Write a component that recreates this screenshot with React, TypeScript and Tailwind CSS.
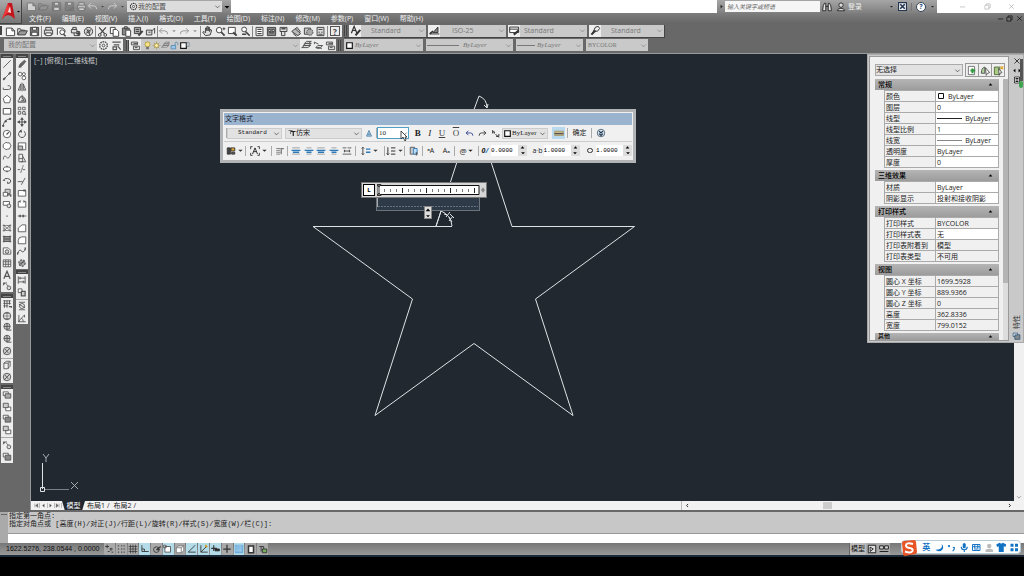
import React from "react";
import type { ReactNode } from "react";

const blue = "#2b78b8";

const art: Record<string, ReactNode> = {
  file: <path d="M2 3h8l4 4v7H2zM10 3v4h4" fill="#fff" />,
  open: <><path d="M1 13l3-6h11l-3 6z" fill="#999" /><path d="M1 13V4h4l1 2h5v1" /></>,
  save: <><path d="M2 2h12v12H2z" fill="#777" /><path d="M5 2h6v4H5zM4 9h8v5H4z" fill="#fff" /></>,
  saveAs: <><path d="M2 2h12v12H2z" fill="#777" /><path d="M5 2h6v4H5z" fill="#fff" /><path d="M8 14l6-6" strokeWidth="3" /></>,
  print: <><path d="M4 6V2h8v4M2 6h12v6H2z" fill="#ddd" /><path d="M4 10h8v4H4z" fill="#fff" /></>,
  preview: <><path d="M2 13V3h8l3 3v3" fill="#fff" /><circle cx="9" cy="9" r="3.5" /><path d="M11 12l3 3" strokeWidth="2" /></>,
  publish: <><path d="M2 5h8v5H2zM4 5V2h5v3" fill="#ddd" /><path d="M6 10v4h8V8h-4" /><path d="M9 11h6M12 8v6" strokeWidth="2" /></>,
  globe: <><circle cx="8" cy="8" r="6" fill="#ddd" /><path d="M8 8l4-3M8 8L5 4M4 11l4-3 2 5" /><circle cx="8" cy="8" r="2" /></>,
  cut: <><path d="M3 2l8 9M13 2L5 11" strokeWidth="1.8" /><circle cx="4" cy="13" r="2" /><circle cx="12" cy="13" r="2" /></>,
  copy: <><path d="M2 2h7v9H2z" fill="#fff" /><path d="M6 5h5l3 3v7H6z" fill="#fff" /></>,
  paste: <><path d="M2 3h10v10H2z" fill="#888" /><path d="M5 1h4v3H5z" /><path d="M7 6h7v9H7z" fill="#fff" /></>,
  match: <><path d="M2 2h9v9H2zM4 5h5M4 8h5" fill="#aaa" /><path d="M8 14l6-7" strokeWidth="3" /></>,
  block: <><path d="M2 6h8v7H2zM5 9h3" fill="#ddd" /><path d="M10 7l4-4v8" /></>,
  undo: <path d="M6 3L2 7l4 4M2 7h8q4 0 4 5" fill="none" />,
  redo: <path d="M10 3l4 4-4 4M14 7H6q-4 0-4 5" fill="none" />,
  pan: <path d="M5 14l-4-5 2-1 2 2V3h2v4-6h2v6-5h2v6l1-3 2 1-2 7z" fill="#ddd" />,
  zoomRt: <><circle cx="6" cy="6" r="4" fill="#fff" /><path d="M9 9l5 5" strokeWidth="2.5" /><path d="M11 4h4M13 2v4" /></>,
  zoomWin: <><path d="M2 2h10v9H2z" fill="#fff" /><path d="M9 9l5 5" strokeWidth="3" /></>,
  zoomPrev: <><circle cx="6" cy="5" r="3.5" fill="#fff" /><path d="M8 8l6 6M3 12h6" strokeWidth="2.2" /></>,
  props: <><path d="M3 2h10v12H3z" fill="#fff" /><path d="M5 5h6M5 8h6M5 11h6" strokeWidth="1.8" /></>,
  center: <><path d="M2 2h12v12H2z" fill="#888" /><path d="M4 5h3v3H4zM9 5h3v3H9zM4 10h8" fill="#fff" /></>,
  palette: <><path d="M3 2h10v6H3zM5 8v6h5V8" fill="#ddd" /><path d="M5 4h6" strokeWidth="2" /></>,
  sheets: <path d="M1 8l5-4 8 7-4 3zM3 11l5 4M6 4l3-2 5 7" fill="#bbb" />,
  markup: <><path d="M2 3h9v9H2z" fill="#ccc" /><circle cx="10" cy="9" r="4.5" strokeDasharray="2 1" fill="#aaa" /></>,
  calc: <><path d="M3 2h10v12H3z" fill="#ddd" /><path d="M5 5h6M5 9h2M9 9h2M5 12h6" /></>,
  gear: <><circle cx="8" cy="8" r="5.5" fill="#eee" strokeDasharray="2.4 1" strokeWidth="2" /><circle cx="8" cy="8" r="2" /></>,
  gearSave: <><path d="M2 3h12M4 7h8M3 10h5v4H3zM10 9l4 5" strokeWidth="1.8" /></>,
  layers: <><path d="M2 3h9v4H2zM5 9h9v5H5z" fill="#ddd" /><path d="M5 5h6M7 11h4" /></>,
  layers2: <path d="M1 11l4-3h9l-4 3zM3 8l4-3h8l-4 3zM5 5l3-3h7l-4 3z" fill="#ddd" />,
  layers3: <path d="M2 3l6 3M2 3v3M7 8h7l-3 3H4zM5 12h8" fill="#ddd" />,
  bulb: <><circle cx="8" cy="6" r="4.5" fill="#f5e28c" stroke="#aa8f31" /><path d="M6 11h4v3H6z" fill="#666" /></>,
  sun: <><circle cx="8" cy="8" r="3.5" fill="#fff29e" stroke="#a0863b" /><path d="M8 1v2M8 13v2M1 8h2M13 8h2M3 3l2 2M11 11l2 2M13 3l-2 2M3 13l2-2" stroke="#a0863b" /></>,
  lock: <><path d="M2 8h8v6H2z" fill="#9cc6e8" stroke="#4c87b4" /><path d="M9 8V4q0-2 2-2t3 2v3" stroke="#4c87b4" fill="none" /></>,
  square: <path d="M3 3h10v10H3z" fill="#fff" stroke="#111" strokeWidth="2" />,
  line: <path d="M2 14L14 2" />,
  xline: <><path d="M2 14L14 2" /><path d="M2 14l3-3M11 5l3-3" strokeWidth="3" /></>,
  pline: <path d="M2 12h8q5 0 4-4-1-3-5-2M2 12V9" fill="none" />,
  polygon: <path d="M8 2l6 5-2 7H4L2 7z" fill="#fff" />,
  rect: <path d="M2 4h12v9H2z" fill="#fff" strokeWidth="1.6" />,
  arc: <><path d="M2 14Q3 4 13 3" fill="none" /><path d="M1 13h2v2H1zM5 6h2v2H5zM12 2h2v2h-2z" fill="#333" /></>,
  circle: <><circle cx="8" cy="8" r="6" fill="#fff" /><path d="M8 8l3-3M7 8h2" strokeWidth="2" /></>,
  cloud: <path d="M4 4q2-3 5-1 4-1 4 2 3 3 0 5 0 4-4 3-3 2-5-1-3-1-2-4-1-3 2-4z" fill="#fff" />,
  spline: <path d="M2 12Q3 3 7 8t7-5" fill="none" />,
  ellipse: <><ellipse cx="8" cy="8" rx="6" ry="3.6" fill="#fff" /><path d="M7 4h2M7 12h2M2 8h1M13 8h1" strokeWidth="2.5" /></>,
  ellArc: <path d="M2 7q2-4 7-3 5 1 5 4 0 4-5 4M2 7h3M9 12v-3" fill="none" strokeWidth="1.6" />,
  insert: <><path d="M5 2h8v7H5z" fill="#ccc" /><path d="M2 7h7v6H2z" fill="#fff" /><path d="M8 11h6v3" strokeWidth="2" /></>,
  make: <><path d="M2 4h10v6H2z" fill="#fff" /><circle cx="11" cy="11" r="3" fill="#ddd" /></>,
  point: <path d="M7 8h2" strokeWidth="2" />,
  hatch: <path d="M3 2v12M13 2v12M1 4h14M1 12h14M3 4l10 8M13 4L3 12M3 8l4 4M9 4l4 4" fill="none" strokeWidth="1" />,
  gradient: <><path d="M3 4h10v8H3z" fill="#999" /><path d="M1 4h14M1 12h14M3 2v12M13 2v12M4 7h8M4 9h8" strokeWidth="1" /></>,
  region: <><path d="M2 3h8l4 4v6H2z" fill="#fff" /><circle cx="8" cy="9" r="3" fill="#ccc" /></>,
  table: <path d="M2 3h12v11H2zM2 6h12M2 10h12M6 3v11M10 3v11" fill="#fff" />,
  letterA: <path d="M3 14L8 2l5 12M5 10h6" fill="none" strokeWidth="2" />,
  addSel: <><path d="M2 7q0-5 6-4M7 5l3 3" fill="none" /><circle cx="11" cy="11" r="3" fill="#ddd" /><path d="M2 4h3M3 2v4" /></>,
  erase: <path d="M3 13l2-5 7-6 2 2-6 7zM3 13h4" fill="#666" />,
  copyObj: <><circle cx="5" cy="5" r="3" fill="#fff" /><circle cx="11" cy="5" r="2.4" fill="#fff" /><circle cx="11" cy="11" r="3" fill="#fff" /></>,
  mirror: <path d="M6 3v10H2zM10 3v10h4zM8 1v14" fill="#ccc" />,
  offset: <path d="M2 13h12q0-8-6-9v3q3 1 3 3H7M3 10q0-5 6-8M2 13v-3" fill="#aaa" strokeWidth="1.6" />,
  array: <path d="M2 2h4v4H2zM9 2h4v4H9zM2 9h4v4H2zM9 9h4v4H9zM13 13h1v1h-1z" fill="#fff" />,
  move: <><path d="M8 2v12M2 8h12" strokeWidth="1.8" /><path d="M6 4l2-3 2 3zM6 12l2 3 2-3zM4 6L1 8l3 2zM12 6l3 2-3 2z" fill="#333" /></>,
  rotate: <><path d="M5 3.5A5.5 5.5 0 1 0 11 3.5" fill="none" strokeWidth="1.6" /><path d="M7 1L4 4l4 1" fill="#444" /></>,
  scale: <><path d="M2 3h12v11H2z" fill="#fff" /><path d="M2 8h7v6H2z" fill="#bbb" /></>,
  stretch: <path d="M3 2h6v12H3zM9 5l5 9H6M3 9h6" fill="#eee" />,
  trim: <path d="M1 9h5M9 9h5M6 14L10 2" strokeDasharray="4 1" />,
  extend: <path d="M1 9h8M7 14L13 3" />,
  breakAt: <><path d="M2 4h12v9H2z" fill="#fff" /><path d="M10 4h4" strokeWidth="3" /></>,
  breakIt: <path d="M5 4H2v9h12V4h-3M5 2v4M11 2v4" fill="#fff" />,
  join: <><path d="M1 8h14" /><path d="M5 6v4M10 6v4" strokeWidth="2.5" /></>,
  chamfer: <path d="M2 14V8l6-5h6v11z" fill="#fff" />,
  fillet: <path d="M2 14V9q0-6 6-6h6v11z" fill="#fff" />,
  blend: <path d="M1 13q3-10 6-5t7-5M1 10v4M13 2v5" fill="none" strokeWidth="1.6" />,
  explode: <><circle cx="8" cy="8" r="5" fill="#aaa" strokeDasharray="3 2" strokeWidth="2" /><path d="M4 9l8-3M6 11l4-6" /></>,
  dim: <path d="M2 2v12M13 2v12M2 5h11M2 11h11M5 3v4M10 9v4" fill="none" />,
  copyDim: <><path d="M2 3h6v6H2z" fill="#fff" /><path d="M7 7h6v7H7z" fill="#ccc" strokeWidth="2" /></>,
  centerMark: <><circle cx="8" cy="8" r="4" /><path d="M3 2h10M3 14h10M3 5l10 6" /></>,
  angle: <path d="M2 14L12 3M2 14h12M10 14q0-4-3-6M3 3v11M12 3v4" fill="none" />,
  wire2d: <><path d="M2 3h12M2 7h12M2 11h8M4 2v12M8 2v12M12 2v7" /><path d="M11 12h4v2" strokeWidth="2" /></>,
  sphere: <><circle cx="8" cy="8" r="6" fill="#e4e4e4" /><path d="M2 8h12M8 2v12M4 4h8M4 12h8" strokeWidth=".9" /></>,
  sphereHalf: <><circle cx="8" cy="7" r="5" fill="#ccc" /><path d="M3 7h10M8 2v10M7 13h8" strokeWidth="1.6" /></>,
  sphereFill: <><circle cx="8" cy="8" r="6" fill="#ccc" /><path d="M3 13L13 3M5 5l5 6" /></>,
  cube: <path d="M3 5l4-3h6v8l-4 4H3zM3 5h7v9M10 5l3-3" fill="#eee" />,
  orderFront: <><path d="M2 3h8v6H2z" fill="#fff" /><path d="M5 6h9v7H5z" fill="#aaa" /></>,
  orderBack: <><path d="M6 8h8v6H6z" fill="#fff" /><path d="M2 2h8v7H2z" fill="#ccc" /></>,
  orderUp: <><path d="M2 2h8v6H2z" fill="#fff" /><path d="M5 5h9v8H5z" fill="#888" /></>,
  snap: <path d="M2 4h6M5 1v6M9 8h5M11 6v5M6 12h3M12 13h3" fill="none" />,
  infer: <path d="M3 3h2M8 3h2M12 3h2M3 8h2M8 8h2M12 8h2M3 13h2M8 13h2M12 13h2" strokeWidth="1.5" />,
  grid: <path d="M1 4h14M1 8h14M1 12h14M4 1v14M8 1v14M12 1v14" strokeWidth="1.1" />,
  ortho: <path d="M3 2v10h11M3 8h4v4" fill="none" />,
  polar: <><circle cx="7" cy="9" r="4.5" fill="none" /><path d="M7 9l7-5M7 9h5" strokeWidth="1.8" /></>,
  osnap: <path d="M3 4h9v9H3zM1 2h4v4H1z" fill="#fff" stroke="#555" />,
  osnap3: <path d="M2 6l4-3h8v8l-4 3H2zM2 6h8v8M10 6l4-3" fill="#fff" stroke="#777" />,
  track: <path d="M13 2L2 13h12" fill="none" />,
  ducs: <><path d="M3 2v11h11M3 13L12 4" fill="none" /><path d="M10 2l3 3" stroke="#d19a22" strokeWidth="3" /></>,
  dyn: <><path d="M6 2v9M2 7h9" strokeWidth="1.8" /><path d="M8 8h7v3H8z" fill="#222" /></>,
  lwt: <path d="M8 1v13M2 8h12" strokeWidth="2" />,
  transp: <><path d="M2 2h12v12H2z" fill="#67a7d8" stroke="#67a7d8" /><path d="M2 5h12M2 8h12M2 11h12M5 2v12M8 2v12M11 2v12" stroke="#c8e7f8" strokeDasharray="1 1" /></>,
  qp: <path d="M4 3h8v11H4z" fill="#fff" strokeWidth="2.4" />,
  cycle: <><path d="M2 4h7v5M5 4v8" fill="none" /><path d="M7 8h7v6H7z" fill="#75ae5c" /></>,
  caret: <path d="M3 6h10l-5 5z" fill="currentColor" stroke="none" />,
  chevron: <path d="M3 6l5 5 5-5" fill="none" />,
  up: <path d="M2 11h12L8 4z" fill="currentColor" stroke="none" />,
  right: <path d="M5 2v12l7-6z" fill="currentColor" stroke="none" />,
  left: <path d="M11 2v12L4 8z" fill="currentColor" stroke="none" />,
  first: <path d="M12 2v12L6 8zM3 2v12" fill="currentColor" />,
  last: <path d="M4 2v12l6-6zM13 2v12" fill="currentColor" />,
  arrowL: <path d="M10 3L5 8l5 5" fill="none" strokeWidth="3" />,
  arrowR: <path d="M6 3l5 5-5 5" fill="none" strokeWidth="3" />,
  min: <path d="M2 9h12" />,
  restore: <path d="M2 5h9v9H2zM5 5V2h9v9h-3" fill="none" />,
  close: <path d="M3 3l10 10M13 3L3 13" />,
  binoc: <><path d="M2 6l2-4h2v12H1zM14 6l-2-4h-2v12h5zM6 7h4" fill="#e4e4e4" /></>,
  user: <><circle cx="8" cy="5" r="3.5" fill="#ddd" /><path d="M2 14q1-4 6-4t6 4z" fill="#ddd" /></>,
  exchange: <><path d="M1 1h14v14H1z" fill="#f4f4f4" stroke="#23354f" strokeWidth="2" /><path d="M4 4l8 8M12 4l-8 8" strokeWidth="3" stroke="#23354f" /></>,
  styleA: <><path d="M2 12L6 2l4 10M4 8h4" fill="none" strokeWidth="1.8" /><path d="M8 15l7-8" strokeWidth="3" /></>,
  styleDim: <><path d="M1 13h14M6 11l7-8v8z" fill="#888" /><path d="M1 13l5-4" strokeWidth="2.5" /></>,
  styleTable: <><path d="M1 3h13v8H1zM1 6h13" fill="#fff" /><path d="M7 14l7-6" strokeWidth="3" /></>,
  styleLead: <><path d="M3 13L8 3l4-1 2 3-3 4H7" fill="#eee" /><path d="M2 14l6-6" strokeWidth="3" /></>,
  columns: <><path d="M2 3h5v10H2z" fill="#444" /><path d="M8 3h6v5H8z" fill="#e0a92e" /><path d="M9 10h5v3H9z" fill="#666" /></>,
  boxA: <><path d="M4 13l4-10 4 10M6 9h4" fill="none" strokeWidth="1.6" /><path d="M1 5V1h3M12 1h3v4M1 11v4h3M12 15h3v-4" fill="none" /></>,
  para: <><path d="M2 4h7M2 7h6M2 10h7M2 13h6" stroke="#777" /><path d="M10 13V4h4" strokeWidth="2" stroke="#777" /></>,
  lines: <><path d="M2 3h12M2 13h12" stroke="#999" /><path d="M1 7h14M3 10h10" stroke={blue} strokeWidth="2.2" /></>,
  linesC: <><path d="M4 3h8M4 13h8" stroke="#999" /><path d="M1 7h14M4 10h8" stroke={blue} strokeWidth="2.2" /></>,
  dist: <><path d="M1 3h6M9 3h6M1 13h14" /><path d="M3 8h10M4 6v4M12 6v4" strokeWidth="1.8" /></>,
  spacing: <><path d="M3 2v12M1 4l2-2 2 2M1 12l2 2 2-2" fill="none" /><path d="M8 5h7M8 10h7" stroke={blue} strokeWidth="2.3" /></>,
  number: <path d="M3 2v12M1 12l2 2 2-2M8 3h7M8 8h7M8 13h7" fill="none" strokeWidth="1.6" />,
  field: <><path d="M2 2h7v11H2z" fill="#ccc" /><path d="M7 4h6v9H7z" fill="#c0ddf4" stroke={blue} /><path d="M12 10v5" strokeWidth="2.5" /></>,
  ruler: <><path d="M1 5h14v7H1z" fill="#c6b686" stroke="#a89a72" /><path d="M1 9h14" stroke="#555" strokeWidth="2" /></>,
  more: <><circle cx="8" cy="8" r="6" fill="#d5e3ef" stroke="#4f6476" /><path d="M5 5l3 3 3-3M5 9l3 3 3-3" fill="none" stroke="#1d3549" strokeWidth="1.8" /></>,
  tt: <><path d="M1 3h8M5 3v7" strokeWidth="2" stroke="#777" /><path d="M6 5h9M10.5 5v9" strokeWidth="2.4" /></>,
  aScale: <path d="M4 13l4-9 4 9zM6 10h4" fill="#a9c9e2" stroke="#5585a8" />,
  fraction: <><path d="M3 2v6M3 5h3v3M8 9l6 6M9 13h5V9" fill="none" strokeWidth="1.6" /></>,
  addObj: <><path d="M2 2h9v12H2z" fill="#fff" stroke="#777" /><path d="M8 5v7M5 8h7" stroke="#2f963d" strokeWidth="3" /></>,
  pick: <><path d="M2 12q0-8 5-9v9z" fill="#aed69c" /><path d="M8 4l6 7-3 1-2 3z" fill="#fff" /></>,
  quick: <><path d="M2 3h8v11H2z" fill="#a9cb83" stroke="#597040" /><path d="M8 5l5 6-3 1-1 3z" fill="#fff" /><path d="M11 2l4 4M15 2l-4 4" stroke="#e3a72b" strokeWidth="2" /></>,
  modelView: <path d="M2 2h12v12H2zM5 5l5 3-5 4z" fill="#ddd" />,
  layoutView: <path d="M1 3h6v5H1zM9 3h6v5H9zM1 12h14" fill="#ddd" />,
};

function Icon({ name, className = "size-[11px]" }: { name: string; className?: string }) {
  return (
    <svg viewBox="0 0 16 16" aria-hidden="true" className={`shrink-0 ${className}`} fill="none" stroke="currentColor" strokeWidth="1.4">
      {art[name]}
    </svg>
  );
}

function Tool({ name, className = "text-[#555]", icon }: { name: string; className?: string; icon?: string }) {
  return (
    <button type="button" aria-label={name} className={`flex min-h-0 min-w-0 flex-1 items-center justify-center ${className}`}>
      <Icon name={name} className={icon} />
    </button>
  );
}

function Combo({ label, value, lead, className = "", text = "" }: { label: string; value: string; lead?: ReactNode; className?: string; text?: string }) {
  return (
    <label className={`flex shrink-0 items-center overflow-hidden ${className}`}>
      {lead}
      <select aria-label={label} defaultValue={value} className={`min-w-0 flex-1 appearance-none bg-transparent leading-[10px] outline-none ${text}`}>
        <option>{value}</option>
      </select>
      <Icon name="chevron" className="mr-px size-[7px]" />
    </label>
  );
}

const Grip = () => <span className="h-[11px] w-[3px] shrink-0 border-x border-[#444] bg-[#777]" />;

const toolGroups: [string, string[]][] = [
  ["w-[38px]", ["file", "open", "save"]],
  ["w-[54px]", ["print", "preview", "publish", "globe"]],
  ["w-[62px]", ["cut", "copy", "paste", "match", "block"]],
  ["w-[43px] text-[#999]", ["undo", "caret", "redo", "caret"]],
  ["w-[52px]", ["pan", "zoomRt", "zoomWin", "zoomPrev"]],
  ["w-[75px]", ["props", "center", "palette", "sheets", "markup", "calc"]],
];

const menus = ["文件(F)", "编辑(E)", "视图(V)", "插入(I)", "格式(O)", "工具(T)", "绘图(D)", "标注(N)", "修改(M)", "参数(P)", "窗口(W)", "帮助(H)"];

function TitleBar() {
  return (
    <header className="flex h-6 shrink-0 bg-gradient-to-b from-[#999] to-[#666]">
      <button type="button" aria-label="应用程序菜单" className="flex w-[22px] shrink-0 items-center border-r border-b border-[#444] bg-gradient-to-b from-[#aaa] to-[#777] pb-px">
        <svg viewBox="0 0 16 18" className="h-[18px] w-4">
          <path d="M2 17L8 1h4l3 16-4-3-3-1-3 1z" fill="#c3161c" />
          <path d="M2 17L8 1l2 9-4 2z" fill="#ed3a3a" />
          <path d="M8 10l2-6 1 7z" fill="#fbe2e2" />
        </svg>
        <Icon name="caret" className="size-[5px]" />
      </button>
      <div className="flex min-w-0 flex-1 flex-col">
        <div className="flex h-[13px] items-stretch bg-white">
          <div className="flex w-[209px] shrink-0 items-center bg-gradient-to-b from-[#a6a6a6] to-[#808080]">
            <div className="flex w-[66px] pl-[3px]">
              {["file", "open", "save", "saveAs", "print"].map((n) => <Tool key={n} name={n} className="text-[#666] opacity-60" />)}
            </div>
            <div className="flex w-[39px] items-center text-[#ccc]">
              <Tool name="undo" className="" />
              <Tool name="caret" className="text-[#444]" icon="size-[5px]" />
              <Tool name="redo" className="" />
              <Tool name="caret" className="text-[#444]" icon="size-[5px]" />
            </div>
            <Combo label="工作空间" value="我的配置" className="h-[11px] w-[95px] bg-[#dcdcdc] text-[#333]" text="text-[7px] text-[#555]" lead={<Icon name="gear" className="ml-0.5 size-[9px]" />} />
            <span className="flex flex-1 justify-center"><Icon name="caret" className="size-[8px] text-black" /></span>
          </div>
          <div className="flex-1" />
          <div className="flex w-[220px] shrink-0 items-center bg-gradient-to-b from-[#a6a6a6] to-[#808080] text-[#222]">
            <span className="flex w-2 justify-center"><Icon name="right" className="size-[5px]" /></span>
            <input aria-label="搜索" placeholder="输入关键字或短语" className="h-[11px] w-[95px] bg-[#f6f6f6] pl-0.5 text-[6px] italic outline-none placeholder:text-[#666]" />
            <Icon name="binoc" className="mx-0.5 size-[10px]" />
            <Icon name="user" className="mx-0.5 size-[10px]" />
            <a href="#login" className="flex-1 text-[7px] leading-[10px] text-[#eee]">登录</a>
            <Icon name="caret" className="mr-1 size-[5px]" />
            <Icon name="exchange" className="mr-1 size-[9px]" />
            <span className="h-2 w-px bg-[#777]" />
            <button type="button" aria-label="帮助" className="mx-1 flex size-[10px] items-center justify-center rounded-full border border-[#345] bg-white text-[7px] leading-[8px] font-bold text-[#1d4c80]">?</button>
            <Icon name="caret" className="mr-0.5 size-[5px]" />
          </div>
          <div className="flex w-[87px] shrink-0 items-center pl-[13px] text-[#aaa]">
            {["min", "restore", "close"].map((n) => <Tool key={n} name={n} className="" icon="size-[7px]" />)}
          </div>
        </div>
        <nav className="flex flex-1 items-center pl-[7px] text-[7px] leading-[10px] text-[#eee]">
          <div className="flex flex-1 gap-[11px]">
            {menus.map((m) => <button type="button" key={m} className="whitespace-nowrap">{m}</button>)}
          </div>
          <div className="flex w-7 shrink-0 text-black">
            {["min", "restore", "close"].map((n) => <Tool key={n} name={n} className="" icon="size-[7px]" />)}
          </div>
        </nav>
      </div>
    </header>
  );
}

const grayCombo = "h-3 bg-[#c9c9c9] text-[#777]";

function StandardBar() {
  const styles: [string, string, string, string, string][] = [
    ["文字样式", "styleA", "Standard", "w-[77px]", "pl-2.5 font-['Open_Sans'] text-[7px]"],
    ["标注样式", "styleDim", "ISO-25", "w-[78px]", "pl-3 font-['Open_Sans'] text-[7px]"],
    ["表格样式", "styleTable", "Standard", "w-[79px]", "pl-1 font-['Open_Sans'] text-[7px]"],
    ["引线样式", "styleLead", "Standard", "w-[75px]", "pl-2.5 font-['Open_Sans'] text-[7px]"],
  ];
  return (
    <div className="flex h-[14px] shrink-0 items-center">
      <div className="flex h-3 items-center bg-[#ececec] text-[#444]">
        <span className="mr-0.5"><Grip /></span>
        {toolGroups.map(([cls, names], i) => (
          <div key={i} className={`flex h-[11px] items-center border-r border-[#888] ${cls}`}>
            {names.map((n, j) => <Tool key={j} name={n} className="" icon={n === "caret" ? "size-[6px]" : "size-[11px]"} />)}
          </div>
        ))}
        <button type="button" aria-label="帮助" className="mx-0.5 flex size-[10px] items-center justify-center border border-[#555] text-[8px] leading-[9px] font-bold">?</button>
      </div>
      <div className="ml-0.5 flex items-center gap-[2px] border-r border-b border-[#444]">
        <Grip />
        {styles.map(([label, icon, value, w, text]) => (
          <Combo key={label} label={label} value={value} className={`${grayCombo} ${w}`} text={text} lead={<span className="flex h-3 w-3 items-center justify-center bg-[#eee] text-[#333]"><Icon name={icon} /></span>} />
        ))}
      </div>
    </div>
  );
}

function LayerBar() {
  const rule = (w: string) => <span className={`ml-px h-px shrink-0 bg-[#777] ${w}`} />;
  return (
    <div className="flex h-[14px] shrink-0 items-center pl-1">
      <Combo label="工作空间" value="我的配置" className={`${grayCombo} w-[93px]`} text="pl-1 text-[7px]" />
      <div className="flex h-3 w-[26px] bg-[#ececec]"><Tool name="gear" /><Tool name="gearSave" /></div>
      <div className="ml-[3px] flex h-3 w-[210px] items-center bg-[#ececec]">
        <Grip />
        <span className="flex w-3"><Tool name="layers" /></span>
        <Combo label="图层" value="0" className={`${grayCombo} w-[159px]`} text="text-[7px]" lead={<span className="flex w-[45px] shrink-0 items-center justify-between pl-0.5">{["bulb", "sun", "layers2", "lock", "square"].map((n) => <Icon key={n} name={n} className="size-[9px]" />)}</span>} />
        <Tool name="layers2" /><Tool name="layers3" /><Tool name="layers" />
      </div>
      <div className="ml-0.5 flex items-center gap-[3px] font-['Liberation_Serif']">
        <Grip />
        <Combo label="颜色" value="ByLayer" className={`${grayCombo} w-[79px] italic`} text="pl-px text-[7px]" lead={<Icon name="square" className="ml-px size-[9px]" />} />
        <Combo label="线型" value="ByLayer" className={`${grayCombo} w-[87px] italic`} text="pl-1 text-[7px]" lead={rule("w-[32px]")} />
        <Combo label="线宽" value="ByLayer" className={`${grayCombo} w-[67px] italic`} text="pl-0.5 text-[7px]" lead={rule("w-[18px]")} />
        <Combo label="打印样式" value="BYCOLOR" className={`${grayCombo} w-[62px]`} text="pl-0.5 text-[6px]" />
      </div>
    </div>
  );
}

function Rail({ names, height, sep }: { names: string[]; height: string; sep?: number }) {
  return (
    <div className="flex w-3 flex-col">
      <span className="flex h-1 items-center justify-center bg-[#444]"><span className="h-px w-2 bg-[#888]" /></span>
      <div className={`flex flex-col bg-[#ededed] ${height}`}>
        {names.map((n, i) => (
          <React.Fragment key={i}>
            {i === sep && <span className="my-px h-px bg-[#aaa]" />}
            <Tool name={n} icon="size-[10px]" />
          </React.Fragment>
        ))}
      </div>
    </div>
  );
}

const draw = ["line", "xline", "pline", "polygon", "rect", "arc", "circle", "cloud", "spline", "ellipse", "ellArc", "insert", "make", "point", "hatch", "gradient", "region", "table", "letterA", "addSel"];
const modify = ["erase", "copyObj", "mirror", "offset", "array", "move", "rotate", "scale", "stretch", "trim", "extend", "breakAt", "breakIt", "join", "chamfer", "fillet", "blend", "explode"];

function ToolRails() {
  return (
    <aside className="flex w-[31px] shrink-0 gap-[3px] border-r border-[#999] pl-px">
      <div className="flex flex-col gap-0.5">
        <Rail names={draw} height="h-[234px]" />
        <Rail names={["wire2d", "sphere", "sphereHalf", "sphereHalf", "sphereFill", "cube", "sphereFill"]} height="h-[85px]" sep={5} />
        <Rail names={["orderFront", "orderBack", "orderUp", "orderBack", "addSel", "orderUp"]} height="h-[74px]" sep={4} />
      </div>
      <div className="flex flex-col gap-px">
        <Rail names={modify} height="h-[211px]" />
        <Rail names={["dim", "copyDim", "centerMark", "angle"]} height="h-[50px]" sep={2} />
      </div>
    </aside>
  );
}

function Drawing() {
  return (
    <svg className="absolute inset-0 h-full w-full" fill="none" stroke="#dfe3e5" strokeWidth="1">
      <g transform="translate(-31 -54)">
        <path d="M452 226.5H313L412.5 299 375 415.5 474 343.5 573 415.5 535.5 299 634.5 226.5H512L474 109.5 436 226.5" />
        <path d="M474 109.5L479 96q8 3 8 12M484 105l3 3 1-4M436 226l5-15q10 4 11 15M444 214l3 1M446 217l4-5M449 221l4-5M450 214l4 4M449 217l3 5" />
        <path d="M42.5 463v26M40.5 487.5h4v4h-4z" />
        <path d="M45 489.5h24" stroke="#7a8084" />
        <path d="M43 454l3 4 3-4M46 458v4M71 482l7 7M78 482l-7 7" stroke="#a8adb0" />
      </g>
    </svg>
  );
}

const Sep = () => <span className="h-[10px] w-px shrink-0 bg-[#aaa]" />;

function Spin({ label, value, lead }: { label: string; value: string; lead: ReactNode }) {
  return (
    <label className="flex items-center">
      <span className="flex w-3 justify-center text-[7px] leading-[10px] text-[#222]">{lead}</span>
      <input aria-label={label} defaultValue={value} className="h-[11px] w-[27px] bg-white font-['Liberation_Mono'] text-[6px] text-black outline-none" />
      <span className="flex w-[9px] flex-col items-center bg-[#ddd] text-black">
        <Icon name="up" className="size-[5px]" />
        <Icon name="caret" className="size-[6px]" />
      </span>
    </label>
  );
}

function Pair({ name, w }: { name: string; w: string }) {
  return (
    <button type="button" aria-label={name} className={`flex items-center justify-center gap-px text-[#333] ${w}`}>
      <Icon name={name} className="size-[10px]" />
      <Icon name="caret" className="size-[7px]" />
    </button>
  );
}

function TextFormat() {
  return (
    <section className="absolute top-[55px] left-[189px] flex w-[416px] flex-col border-3 border-[#b2b4b6] bg-[#f0f0f0] p-px text-[#222]">
      <h2 className="h-3 bg-[#9ab3cf] pl-px text-[7px] leading-[12px] text-[#1c2733]">文字格式</h2>
      <div className="flex h-[17px] items-center border-b border-[#ccc] pl-0.5">
        <Sep />
        <Combo label="样式" value="Standard" className="h-[11px] w-[55px] border border-[#ccc] bg-[#e2e2e2]" text="pl-2.5 font-['Liberation_Mono'] text-[6px]" />
        <Combo label="字体" value="仿宋" className="ml-[3px] h-[11px] w-[77px] border border-[#ccc] bg-[#e2e2e2]" text="text-[7px]" lead={<Icon name="tt" className="ml-0.5 size-[8px]" />} />
        <span className="flex w-[14px]"><Tool name="aScale" icon="size-[10px]" /></span>
        <Sep />
        <label className="flex h-3 w-8 items-center border border-[#4f9fc8] bg-white">
          <input aria-label="文字高度" defaultValue="10" className="h-[10px] w-0 min-w-0 flex-1 pl-px font-['Liberation_Serif'] text-[7px] outline-none" />
          <Icon name="chevron" className="size-[7px]" />
        </label>
        <div className="flex w-[54px] items-center justify-around pl-0.5 font-['Liberation_Serif'] text-[9px] leading-[12px]">
          <button type="button" className="font-bold">B</button>
          <button type="button" className="italic">I</button>
          <button type="button" className="text-[#444] underline">U</button>
          <button type="button" className="text-[#444] overline">O</button>
        </div>
        <div className="flex w-[39px] text-[#1b2f86]">
          <Tool name="undo" className="" icon="size-[9px]" />
          <Tool name="redo" className="text-[#222]" icon="size-[9px]" />
          <Tool name="fraction" className="text-[#222]" icon="size-[9px]" />
        </div>
        <Combo label="颜色" value="ByLayer" className="h-[11px] w-[46px] border border-[#ccc] bg-[#e2e2e2]" text="font-['Liberation_Serif'] text-[7px]" lead={<Icon name="square" className="size-[9px]" />} />
        <span className="mx-px"><Sep /></span>
        <button type="button" aria-label="标尺" className="mx-0.5 flex h-3 w-[13px] items-center justify-center bg-[#b9d9ef]"><Icon name="ruler" className="size-[10px]" /></button>
        <Sep />
        <button type="button" className="w-[23px] text-[7px] leading-[10px]">确定</button>
        <Sep />
        <span className="flex w-[18px]"><Tool name="more" icon="size-[10px]" /></span>
      </div>
      <div className="flex h-[17px] items-center">
        <Pair name="columns" w="w-[21px]" />
        <Sep />
        <Pair name="boxA" w="w-[25px]" />
        <Sep />
        <span className="flex w-[15px]"><Tool name="para" icon="size-[10px]" /></span>
        <Sep />
        <div className="flex w-[67px] px-0.5">
          {["lines", "linesC", "lines", "linesC", "dist"].map((n, i) => <Tool key={i} name={n} icon="size-[10px]" />)}
        </div>
        <Sep />
        <Pair name="spacing" w="w-[28px]" />
        <Sep />
        <Pair name="number" w="w-[19px]" />
        <Sep />
        <span className="flex w-[17px]"><Tool name="field" icon="size-[10px]" /></span>
        <Sep />
        <div className="flex w-[31px] items-center justify-around text-[7px] leading-[10px]">
          <button type="button">ᵃA</button>
          <button type="button">Aₐ</button>
        </div>
        <Sep />
        <button type="button" className="flex w-[23px] items-center justify-center text-[8px] leading-[10px]">@<Icon name="caret" className="size-[7px]" /></button>
        <Sep />
        <div className="flex flex-1 justify-between">
          <Spin label="倾斜角度" value="0.0000" lead={<b className="italic">0<span className="text-[#2b78b8]">/</span></b>} />
          <Spin label="追踪" value="1.0000" lead="a·b" />
          <Spin label="宽度因子" value="1.0000" lead={<span className="h-[5px] w-[6px] rounded-full border border-[#333]" />} />
        </div>
      </div>
    </section>
  );
}

function InlineEditor() {
  return (
    <div className="absolute top-[128px] left-[330px] w-[126px]">
      <div className="flex h-4 items-center border border-[#777] bg-[#d6d6d6] px-px">
        <button type="button" aria-label="制表符" className="flex size-3 shrink-0 items-center justify-center border border-black bg-white text-[6px] leading-[8px] font-bold">L</button>
        <svg viewBox="0 0 103 12" className="ml-0.5 h-3 w-[103px] shrink-0">
          <path d="M0 1.500h102v9H0z" fill="#fff" stroke="#111" />
          <path d="M7.500 5v3M13.500 5v3M19.500 5v3M31.500 5v3M37.500 5v3M43.500 5v3M55.500 5v3M61.500 5v3M67.500 5v3M79.500 5v3M85.500 5v3M91.500 5v3" stroke="#777" />
          <path d="M25.500 4v5M49.500 4v5M73.500 4v5M97.500 4v5" stroke="#222" />
          <path d="M0 .5h4L2 3zM0 11.500h4L2 9zM2 2v8" fill="#888" stroke="#333" />
        </svg>
        <svg viewBox="0 0 6 8" className="ml-px h-2 w-1.5"><path d="M3 0l3 4-3 4-3-4z" fill="#888" /></svg>
      </div>
      <textarea aria-label="多行文字" className="ml-[15px] block h-[13px] w-[104px] resize-none border border-t-0 border-[#6c747b] bg-[#2e3a47] outline-none" />
      <svg viewBox="0 0 104 13" className="absolute top-4 left-[15px] h-[13px] w-[104px]">
        <path d="M2 8.500h100" stroke="#66727d" strokeDasharray="2 1" />
        <path d="M1.500 0v9" stroke="#aaa" />
      </svg>
      <span className="absolute top-6 left-[63px] flex h-[13px] w-2 flex-col items-center justify-center border border-[#888] bg-[#ddd] text-black">
        <Icon name="up" className="size-[6px]" />
        <Icon name="caret" className="size-[6px]" />
      </span>
    </div>
  );
}

type Row = [string, ReactNode];
const by = (w: string) => <span className="flex items-center justify-end gap-[3px] pr-[7px]"><span className={`h-px w-[25px] ${w}`} />ByLayer</span>;
const sections: { title: string; height: string; rows: Row[]; dim?: number[] }[] = [
  { title: "常规", height: "h-[78px]", rows: [["颜色", <span className="flex items-center gap-[3px]"><Icon name="square" className="size-[8px]" />ByLayer</span>], ["图层", "0"], ["线型", by("bg-[#222]")], ["线型比例", "1"], ["线宽", by("bg-[#888]")], ["透明度", "ByLayer"], ["厚度", "0"]] },
  { title: "三维效果", height: "h-[23px]", rows: [["材质", "ByLayer"], ["阴影显示", "投射和接收阴影"]] },
  { title: "打印样式", height: "h-[45px]", rows: [["打印样式", "BYCOLOR"], ["打印样式表", "无"], ["打印表附着到", "模型"], ["打印表类型", "不可用"]], dim: [0, 2, 3] },
  { title: "视图", height: "h-[56px]", rows: [["圆心 X 坐标", "1699.5928"], ["圆心 Y 坐标", "889.9366"], ["圆心 Z 坐标", "0"], ["高度", "362.8336"], ["宽度", "799.0152"]], dim: [0, 1, 2, 3, 4] },
];

function SectionHead({ title, className }: { title: string; className: string }) {
  return (
    <h3 className={`flex shrink-0 items-center justify-between bg-gradient-to-b from-[#b5b5b5] to-[#9c9c9c] pr-1.5 pl-[3px] font-medium text-black ${className}`}>
      {title}
      <Icon name="up" className="size-[5px]" />
    </h3>
  );
}

function Properties() {
  return (
    <section className="absolute top-0 right-0 flex w-[157px] border border-[#aaa] bg-[#c9c9c9] text-[7px] text-[#222]">
      <div className="m-px flex min-w-0 flex-1 flex-col border border-[#999] bg-[#f0f0f0] pt-[6px] pl-[5px]">
        <div className="flex h-[14px] shrink-0 items-center gap-[2px]">
          <Combo label="选择对象" value="无选择" className="h-3 w-[88px] border border-[#aaa] bg-[#e2e2e2]" text="text-[7px]" />
          <div className="flex h-[14px] w-[40px] divide-x divide-[#999] border border-[#999]">
            {["addObj", "pick", "quick"].map((n) => <Tool key={n} name={n} icon="size-[11px]" />)}
          </div>
        </div>
        <div className="mt-0.5 flex gap-1">
          <div className="flex w-[124px] flex-col gap-0.5">
            {sections.map((s) => (
              <div key={s.title} className="shrink-0">
                <SectionHead title={s.title} className="h-[11px] leading-[11px]" />
                <div className="pl-[9px]">
                  <table className={`w-full table-fixed border-collapse ${s.height}`}>
                    <tbody>
                      {s.rows.map(([k, v], i) => (
                        <tr key={k}>
                          <th scope="row" className="w-[51px] overflow-hidden border border-[#aaa] bg-[#f0f0f0] p-0 pl-px text-left leading-[9px] font-normal whitespace-nowrap">{k}</th>
                          <td className={`overflow-hidden border border-[#aaa] p-0 pl-px leading-[9px] whitespace-nowrap ${s.dim?.includes(i) ? "bg-[#f0f0f0]" : "bg-white"}`}>{v}</td>
                        </tr>
                      ))}
                    </tbody>
                  </table>
                </div>
              </div>
            ))}
            <SectionHead title="其他" className="h-[7px] text-[6px] leading-[7px]" />
          </div>
          <div className="w-[5px] bg-[#ddd]"><div className="h-[204px] bg-[#b4b4b4]" /></div>
        </div>
      </div>
      <div className="flex w-[13px] flex-col items-center gap-[3px] pt-0.5 text-black">
        <Icon name="close" className="size-[8px]" />
        <span className="flex"><Icon name="left" className="size-[5px]" /><Icon name="right" className="size-[5px]" /></span>
        <Icon name="props" className="size-[8px]" />
        <span className="flex-1" />
        <span className="rotate-180 leading-[8px] text-[#333] [text-orientation:sideways] [writing-mode:vertical-rl]">特性</span>
        <Icon name="orderUp" className="mb-px size-[9px] text-[#27557d]" />
      </div>
      <span className="absolute top-1 right-0 h-[22px] w-[3px] bg-[#555]" />
      <span className="absolute top-[26px] right-0 h-[7px] w-1 rounded-sm bg-[#3fa34f]" />
    </section>
  );
}

function Workspace() {
  return (
    <main className="relative flex min-h-0 flex-1 border-t border-[#999]">
      <ToolRails />
      <div className="flex min-w-0 flex-1 flex-col">
        <div className="flex min-h-0 flex-1">
          <div className="relative min-w-0 flex-1 overflow-hidden bg-[#212830]">
            <p className="pt-[3px] pl-[3px] text-[7px] leading-[8px] text-[#ccc]">[−] [俯视] [二维线框]</p>
            <Drawing />
            <TextFormat />
            <InlineEditor />
            <svg viewBox="0 0 8 12" className="absolute top-[76px] left-[369px] h-3 w-2"><path d="M1 1v8l2-2 2 4 1-1-1-3h2z" fill="#fff" stroke="#222" strokeWidth=".8" /></svg>
          </div>
          <div className="flex w-[10px] flex-col items-center justify-end bg-[#f0f0f0] pb-px text-[#555]"><Icon name="chevron" className="size-[6px]" /></div>
        </div>
        <div className="flex h-[9px] items-center bg-[#f2f2f2] text-[7px] leading-[9px] text-[#222]">
          <div className="flex w-[31px] pl-0.5 text-[#555]">
            {["first", "left", "right", "last"].map((n) => <Tool key={n} name={n} className="border-r border-[#bbb]" icon="size-[5px]" />)}
          </div>
          <button type="button" className="w-[23px] bg-[#212830] leading-[9px] text-white [clip-path:polygon(0_0,100%_0,88%_100%,12%_100%)]">模型</button>
          <button type="button" className="pl-0.5">布局1</button><span className="px-0.5">/</span>
          <button type="button" className="pl-0.5">布局2</button><span className="pl-0.5">/</span>
          <div className="flex-1" />
          <div className="flex h-full w-[343px] items-center justify-between border-l border-[#bbb] pr-[12px] pl-[3px]">
            <Icon name="arrowL" className="size-[5px]" />
            <span className="mr-[39px] ml-auto h-[7px] w-[9px] bg-[#cdcdcd]" />
            <span className="w-[136px]" />
            <Icon name="arrowR" className="size-[5px]" />
          </div>
        </div>
      </div>
      <Properties />
    </main>
  );
}

function CommandLine() {
  return (
    <section className="flex h-[33px] shrink-0 border-t-2 border-[#686868] bg-[#c7c7c7]">
      <div className="flex w-2 shrink-0 justify-center bg-[#aaa] pt-0.5"><span className="h-px w-1.5 bg-[#666]" /></div>
      <div className="flex flex-1 flex-col font-['Liberation_Mono','Noto_Sans_CJK_SC',monospace] text-[7px] leading-[8px] text-[#222]">
        <div className="flex-1 pl-px whitespace-pre">
          <p>指定第一角点:</p>
          <p>指定对角点或 [高度(H)/对正(J)/行距(L)/旋转(R)/样式(S)/宽度(W)/栏(C)]:</p>
        </div>
        <input aria-label="命令" className="h-[10px] w-full border-t border-[#999] bg-white outline-none" />
      </div>
    </section>
  );
}

const toggles: [string, boolean][] = [["snap", false], ["infer", false], ["grid", false], ["ortho", true], ["polar", false], ["osnap", true], ["osnap3", false], ["track", true], ["ducs", true], ["dyn", true], ["lwt", false], ["transp", true], ["qp", false], ["cycle", false]];

function StatusBar() {
  return (
    <footer className="relative h-[33px] shrink-0 bg-black">
      <div className="flex h-[14px] items-center border-b-2 border-[#1b2838] bg-gradient-to-b from-[#777] to-[#999] text-[#111]">
        <output className="w-[104px] shrink-0 pl-1.5 font-['Liberation_Sans'] text-[7px] leading-[10px] whitespace-pre">1622.5276, 238.0544 , 0.0000</output>
        <div className="flex h-full w-[164px] shrink-0 gap-px">
          {toggles.map(([n, on]) => <Tool key={n} name={n} className={on ? "bg-[#b4dce8] text-[#333]" : "bg-[#a9a9a9] text-[#333]"} icon="size-[10px]" />)}
        </div>
        <div className="flex-1" />
        <div className="mr-[118px] flex h-full w-[57px] items-center border-l border-[#666] text-[7px] leading-[10px]">
          <button type="button" className="h-full w-4 bg-[#bbb] whitespace-nowrap">模型</button>
          <span className="flex h-full w-6"><Tool name="modelView" className="bg-[#aaa]" icon="size-[10px]" /><Tool name="layoutView" className="bg-[#aaa]" icon="size-[10px]" /></span>
        </div>
      </div>
      <div className="absolute -top-[3px] right-[3px] flex h-[14px] w-[120px] items-center rounded-sm border border-[#b8cbd8] bg-white pl-[18px] text-[#1272c4]">
        <svg viewBox="0 0 18 18" className="absolute -top-0.5 -left-0.5 size-[18px]">
          <path d="M2 4q0-2 2-2l10-1q2 0 2 2l1 10q0 2-2 2L5 17q-2 0-2-2z" fill="#e75425" />
          <path d="M13 5Q6 3 6 6.500q0 2 3.500 2.500 4 .5 3 3-1.500 2.500-7.500.500" fill="none" stroke="#fff" strokeWidth="2" />
        </svg>
        <span className="flex-1 text-center text-[8px] leading-[10px] font-bold">英</span>
        <svg viewBox="0 0 12 12" className="h-[9px] flex-1"><path d="M9 1q3 8-8 8 5 4 9 0 3-4-1-8z" fill="currentColor" /></svg>
        <svg viewBox="0 0 12 12" className="h-[9px] flex-1"><circle cx="3" cy="4" r="1.500" fill="currentColor" /><path d="M8 6h2v2l-2 3" stroke="currentColor" strokeWidth="1.500" fill="none" /></svg>
        <svg viewBox="0 0 12 12" className="h-[9px] flex-1"><rect x="4" y="0" width="4" height="7" rx="2" fill="currentColor" /><path d="M2 5q0 4 4 4t4-4M6 9v3" stroke="currentColor" strokeWidth="1.500" fill="none" /></svg>
        <svg viewBox="0 0 12 12" className="h-[9px] flex-1"><path d="M1 2h10v8H1zM1 5h10M4 2v5M8 2v5M3 8h6" stroke="currentColor" strokeWidth="1.300" fill="none" /></svg>
        <svg viewBox="0 0 12 12" className="h-[9px] flex-1 text-[#bbb]"><circle cx="6" cy="4" r="3" fill="currentColor" /><path d="M1 12V9q5-3 10 0v3z" fill="currentColor" /></svg>
        <svg viewBox="0 0 12 12" className="h-[10px] flex-1"><path d="M4 1q2 2 4 0l4 2-1 3-2-1v7H3V5L1 6 0 3z" fill="currentColor" /></svg>
        <svg viewBox="0 0 12 12" className="h-[9px] flex-1"><path d="M1 1h4v4H1zM7 1h4v4H7zM1 7h4v4H1zM7 7h4v4H7z" fill="currentColor" /></svg>
      </div>
    </footer>
  );
}

export default function App() {
  return (
    <div className="flex h-screen flex-col overflow-hidden bg-[#686868] font-['Open_Sans','Noto_Sans_CJK_SC',sans-serif] text-[7px]">
      <TitleBar />
      <StandardBar />
      <LayerBar />
      <div className="h-px shrink-0" />
      <Workspace />
      <CommandLine />
      <StatusBar />
    </div>
  );
}
